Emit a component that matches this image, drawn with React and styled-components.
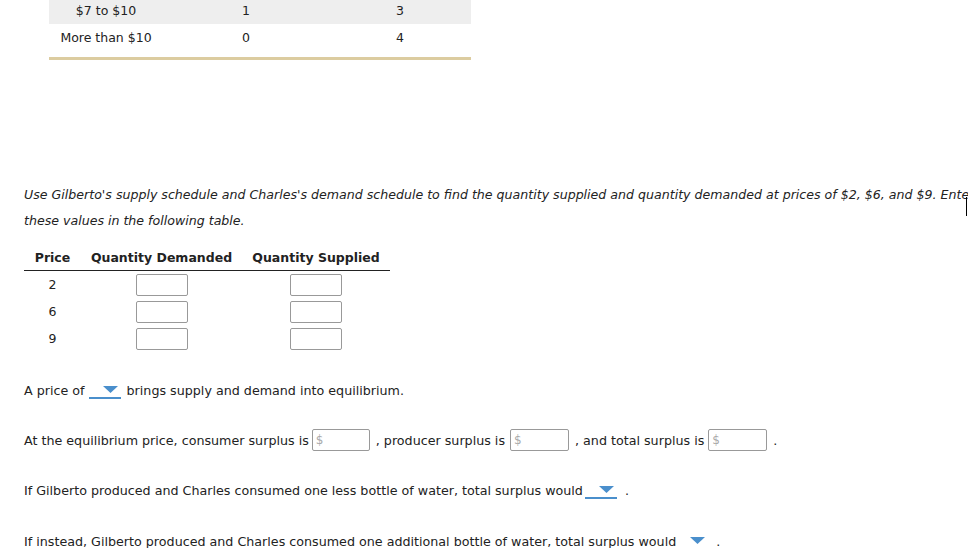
import styled, { createGlobalStyle } from "styled-components";

const GlobalStyle = createGlobalStyle`
  html, body {
    margin: 0;
    padding: 0;
    overflow: hidden;
    background: #fff;
  }
  body {
    font-family: "DejaVu Sans", Verdana, sans-serif;
    font-size: 12.7px;
    color: #222;
  }
`;

const Page = styled.div`
  position: relative;
  padding: 0 0 0 24px;
  width: 1100px;
`;

const ScheduleTable = styled.table`
  margin: -3px 0 0 25px;
  width: 422px;
  border-collapse: collapse;
  table-layout: fixed;
  font-size: 12.5px;

  td {
    height: 27px;
    padding: 0;
    text-align: center;
    vertical-align: middle;
  }
`;

const ScheduleRow = styled.tr`
  background: ${(p) => (p.$shaded ? "#eeeeee" : "#fff")};
`;

const TanRule = styled.div`
  margin: 6px 0 0 25px;
  width: 422px;
  height: 3px;
  background: #dccca0;
`;

const Prompt = styled.p`
  margin: 122px 0 0;
  font-size: 12.6px;
  font-style: italic;
  line-height: 26px;
  white-space: nowrap;
`;

const Cursor = styled.span`
  position: absolute;
  left: 966px;
  top: 200px;
  width: 1px;
  height: 19px;
  background: #000;
`;

const AnswerTable = styled.table`
  margin-top: 14px;
  border-collapse: collapse;
  table-layout: fixed;
  width: 366px;
  font-size: 12.5px;

  th {
    font-weight: bold;
    padding: 0 0 3px;
    height: 19px;
    text-align: center;
    border-bottom: 1px solid #222;
    white-space: nowrap;
  }
  td {
    height: 27px;
    padding: 0;
    text-align: center;
    vertical-align: middle;
  }
`;

const Col = styled.col`
  width: ${(p) => p.$w}px;
`;

const Box = styled.input`
  box-sizing: border-box;
  width: ${(p) => p.$w || 52}px;
  height: 22px;
  margin: 0;
  padding: 0 3px;
  border: 1px solid #999;
  border-radius: 2px;
  font-family: "DejaVu Sans", Verdana, sans-serif;
  font-size: 12px;
  color: #222;
  vertical-align: middle;
  background: #fff;

  &::placeholder {
    color: #aaa;
  }
`;

const Line = styled.p`
  margin: ${(p) => p.$top}px 0 0;
  height: 22px;
  white-space: nowrap;
  display: flex;
  align-items: center;
`;

const Gap = styled.span`
  display: inline-block;
  width: ${(p) => p.$w}px;
`;

const Dropdown = styled.span`
  display: inline-flex;
  justify-content: flex-end;
  align-items: flex-start;
  align-self: flex-start;
  box-sizing: border-box;
  width: 32px;
  height: 20px;
  padding: 7px 3px 0 0;
  border-bottom: 2px solid #4a8fcc;
`;

const Caret = () => (
  <svg width="15" height="7" viewBox="0 0 15 7">
    <path d="M0 0 H15 L7.5 7 Z" fill="#4a8fcc" />
  </svg>
);

const App = () => {
  return (
    <Page>
      <GlobalStyle />
      <ScheduleTable>
        <colgroup>
          <Col $w={114} />
          <Col $w={166} />
          <Col $w={142} />
        </colgroup>
        <tbody>
          <ScheduleRow $shaded>
            <td>$7 to $10</td>
            <td>1</td>
            <td>3</td>
          </ScheduleRow>
          <ScheduleRow>
            <td>More than $10</td>
            <td>0</td>
            <td>4</td>
          </ScheduleRow>
        </tbody>
      </ScheduleTable>
      <TanRule />

      <Prompt>
        Use Gilberto's supply schedule and Charles's demand schedule to find the
        quantity supplied and quantity demanded at prices of $2, $6, and $9. Enter
        <br />
        these values in the following table.
      </Prompt>
      <Cursor />

      <AnswerTable>
        <colgroup>
          <Col $w={57} />
          <Col $w={161} />
          <Col $w={148} />
        </colgroup>
        <thead>
          <tr>
            <th>Price</th>
            <th>Quantity Demanded</th>
            <th>Quantity Supplied</th>
          </tr>
        </thead>
        <tbody>
          {[2, 6, 9].map((price) => (
            <tr key={price}>
              <td>{price}</td>
              <td>
                <Box />
              </td>
              <td>
                <Box />
              </td>
            </tr>
          ))}
        </tbody>
      </AnswerTable>

      <Line $top={27}>
        A price of<Gap $w={4} />
        <Dropdown>
          <Caret />
        </Dropdown>
        <Gap $w={6} />
        brings supply and demand into equilibrium.
      </Line>

      <Line $top={28}>
        At the equilibrium price, consumer surplus is<Gap $w={3} />
        <Box $w={58} placeholder="$" />
        <Gap $w={6} />, producer surplus is<Gap $w={5} />
        <Box $w={59} placeholder="$" />
        <Gap $w={6} />, and total surplus is<Gap $w={4} />
        <Box $w={59} placeholder="$" />
        <Gap $w={6} />.
      </Line>

      <Line $top={28}>
        If Gilberto produced and Charles consumed one less bottle of water, total
        surplus would<Gap $w={2} />
        <Dropdown>
          <Caret />
        </Dropdown>
        <Gap $w={8} />.
      </Line>

      <Line $top={29}>
        If instead, Gilberto produced and Charles consumed one additional bottle of
        water, total surplus would<Gap $w={0} />
        <Dropdown>
          <Caret />
        </Dropdown>
        <Gap $w={8} />.
      </Line>
    </Page>
  );
};

export default App;
